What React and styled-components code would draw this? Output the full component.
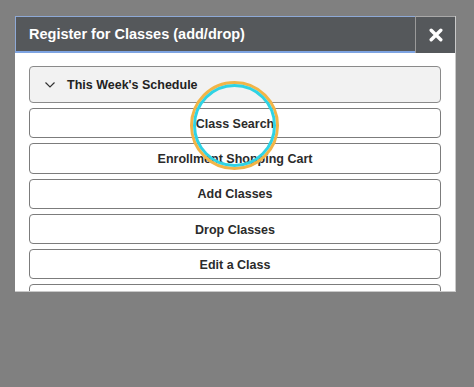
import React from "react";
import styled, { createGlobalStyle } from "styled-components";

const GlobalStyle = createGlobalStyle`
  html, body {
    margin: 0;
    padding: 0;
    background: #808080;
    font-family: "Liberation Sans", Arial, sans-serif;
  }
`;

const Page = styled.div`
  width: 474px;
  height: 387px;
  padding: 16px 0 0 15px;
  box-sizing: border-box;
  position: relative;
  overflow: hidden;
`;

const Dialog = styled.div`
  width: 441px;
  height: 276px;
  background: #fff;
  border-right: 1px solid #c9c9c9;
  border-bottom: 1px solid #c9c9c9;
  box-sizing: border-box;
  overflow: hidden;
  display: flex;
  flex-direction: column;
`;

const Header = styled.div`
  display: flex;
  height: 37px;
  flex-shrink: 0;
`;

const Title = styled.div`
  flex: 1;
  background: #55585b;
  border-top: 1px solid #8ea9d6;
  border-left: 1px solid #8ea9d6;
  border-bottom: 2px solid #7ea4e2;
  color: #fff;
  font-weight: bold;
  font-size: 14.5px;
  display: flex;
  align-items: center;
  padding-left: 13px;
  box-sizing: border-box;
`;

const CloseButton = styled.button`
  width: 40px;
  border: none;
  border-top: 1px solid #a9a9a9;
  border-left: 1px solid #9a9a9a;
  background: #55585b;
  color: #fff;
  display: flex;
  align-items: center;
  justify-content: center;
  padding: 0;
  cursor: pointer;
`;

const Body = styled.div`
  padding: 13px 14px 0 14px;
  display: flex;
  flex-direction: column;
  gap: 5px;
`;

const Accordion = styled.div`
  height: 37px;
  background: #f2f2f2;
  border: 1px solid #8a8a8a;
  border-radius: 4px;
  box-sizing: border-box;
  display: flex;
  align-items: center;
  gap: 12px;
  padding-left: 15px;
  font-size: 12.5px;
  font-weight: bold;
  color: #222;
`;

const MenuButton = styled.button`
  height: 30.3px;
  background: #fff;
  border: 1px solid #7c7c7c;
  border-radius: 4px;
  font-family: "Liberation Sans", Arial, sans-serif;
  font-size: 12.5px;
  font-weight: bold;
  color: #2b2b2b;
  flex-shrink: 0;
  padding-top: 2px;
  cursor: pointer;
`;

const Spotlight = styled.div`
  position: absolute;
  left: 190px;
  top: 81px;
  width: 89px;
  height: 89px;
  border-radius: 50%;
  border: 3px solid #f2b547;
  box-sizing: border-box;
  pointer-events: none;

  &::after {
    content: "";
    position: absolute;
    inset: 0;
    border-radius: 50%;
    border: 3px solid #2fd3e4;
  }
`;

const items = [
  "Class Search",
  "Enrollment Shopping Cart",
  "Add Classes",
  "Drop Classes",
  "Edit a Class",
  "",
];

export default function App() {
  return (
    <>
      <GlobalStyle />
      <Page>
        <Dialog>
          <Header>
            <Title>Register for Classes (add/drop)</Title>
            <CloseButton aria-label="Close">
              <svg width="14" height="14" viewBox="0 0 14 14">
                <path d="M2.2 2.2 L11.8 11.8 M11.8 2.2 L2.2 11.8" stroke="#fff" strokeWidth="3.4" strokeLinecap="round" />
              </svg>
            </CloseButton>
          </Header>
          <Body>
            <Accordion>
              <svg width="10" height="6" viewBox="0 0 10 6">
                <path d="M0.5 0.5 L5 5 L9.5 0.5" fill="none" stroke="#333" strokeWidth="1.2" />
              </svg>
              This Week's Schedule
            </Accordion>
            {items.map((label, i) => (
              <MenuButton key={i}>{label}</MenuButton>
            ))}
          </Body>
        </Dialog>
        <Spotlight />
      </Page>
    </>
  );
}
